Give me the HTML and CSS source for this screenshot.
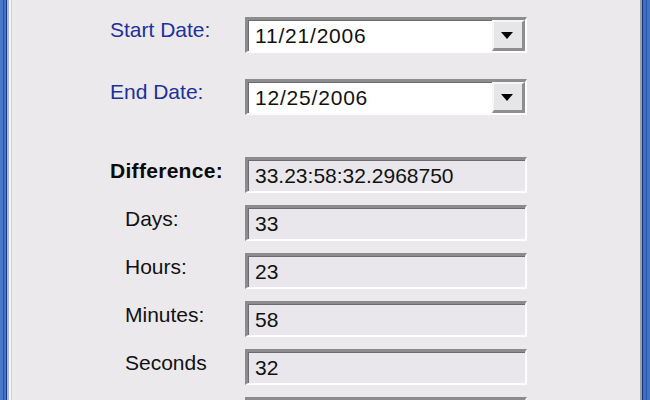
FILE: index.html
```html
<!DOCTYPE html>
<html>
<head>
<meta charset="utf-8">
<title>Date Difference</title>
<link rel="stylesheet" href="styles.css">
</head>
<body>
<div class="window">
  <div class="frame-left"></div>
  <div class="client">
    <div class="dates">
      <div class="row">
        <div class="label date-label">Start Date:</div>
        <div class="box edit">
          <span class="value date-value">11/21/2006</span>
          <span class="drop"><svg width="12" height="7" viewBox="0 0 12 7"><polygon points="0,0 12,0 6,7" fill="#000"/></svg></span>
        </div>
      </div>
      <div class="row">
        <div class="label date-label">End Date:</div>
        <div class="box edit">
          <span class="value date-value">12/25/2006</span>
          <span class="drop"><svg width="12" height="7" viewBox="0 0 12 7"><polygon points="0,0 12,0 6,7" fill="#000"/></svg></span>
        </div>
      </div>
    </div>
    <div class="results">
      <div class="row">
        <div class="label diff-label">Difference:</div>
        <div class="box readonly"><span class="value">33.23:58:32.2968750</span></div>
      </div>
      <div class="row">
        <div class="label part-label">Days:</div>
        <div class="box readonly"><span class="value">33</span></div>
      </div>
      <div class="row">
        <div class="label part-label">Hours:</div>
        <div class="box readonly"><span class="value">23</span></div>
      </div>
      <div class="row">
        <div class="label part-label">Minutes:</div>
        <div class="box readonly"><span class="value">58</span></div>
      </div>
      <div class="row">
        <div class="label part-label">Seconds</div>
        <div class="box readonly"><span class="value">32</span></div>
      </div>
      <div class="row">
        <div class="label part-label">Milliseconds:</div>
        <div class="box readonly"><span class="value">296</span></div>
      </div>
    </div>
  </div>
  <div class="frame-right"></div>
</div>
</body>
</html>
```

FILE: styles.css
```css
html, body {
  margin: 0;
  padding: 0;
  width: 650px;
  height: 400px;
  overflow: hidden;
  background: #ece9ed;
}

.window {
  display: flex;
  width: 650px;
  height: 400px;
  font-family: "Liberation Sans", Arial, sans-serif;
  font-size: 21px;
  color: #111;
}

.frame-left {
  width: 12px;
  flex: none;
  background: linear-gradient(to right,
    #4a78c8 0 3px, #2c529e 3px 4px, #4472cc 4px 6px, #1e3a7e 6px 7px,
    #a9bbde 7px 9px, #f6f6f8 9px 11px, #d2d2d8 11px 12px);
}

.frame-right {
  width: 10px;
  flex: none;
  background: linear-gradient(to right,
    #9c9cab 0 2px, #1e3670 2px 3px, #3d6dc9 3px 6px, #2a56a8 6px 7px, #4272cc 7px 10px);
}

.client {
  flex: 1;
  background: #ece9ed;
  padding: 17px 0 0 98px;
  display: flex;
  flex-direction: column;
  gap: 42px;
}

.dates {
  display: flex;
  flex-direction: column;
  gap: 26px;
}

.results {
  display: flex;
  flex-direction: column;
  gap: 12px;
}

.row {
  display: grid;
  grid-template-columns: 135px 282px;
  align-items: start;
}

.label {
  line-height: 24px;
  white-space: nowrap;
}

.date-label {
  color: #20309a;
  padding-top: 1px;
}

.diff-label {
  font-weight: bold;
  color: #0a0a0a;
  padding-top: 2px;
  letter-spacing: 0.3px;
}

.part-label {
  padding-left: 15px;
  padding-top: 2px;
}

.box {
  box-sizing: border-box;
  height: 36px;
  display: flex;
  border-top: 3px solid #8c8c8e;
  border-left: 3px solid #8c8c8e;
  border-bottom: 2px solid #fdfdfd;
  border-right: 2px solid #fdfdfd;
  box-shadow: inset 1px 1px 0 #6c6c70;
}

.edit {
  background: #ffffff;
}

.readonly {
  background: #e9e7eb;
}

.value {
  flex: 1;
  line-height: 31px;
  padding-left: 7px;
  white-space: nowrap;
  color: #111;
}

.date-value {
  letter-spacing: 0.8px;
}

.drop {
  box-sizing: border-box;
  width: 33px;
  height: 31px;
  flex: none;
  display: flex;
  align-items: center;
  justify-content: center;
  background: #e6e5e8;
  border-top: 2px solid #f6f6f6;
  border-left: 2px solid #f6f6f6;
  border-right: 3px solid #8e8e92;
  border-bottom: 3px solid #8e8e92;
  padding-top: 1px;
  padding-right: 3px;
}
```
